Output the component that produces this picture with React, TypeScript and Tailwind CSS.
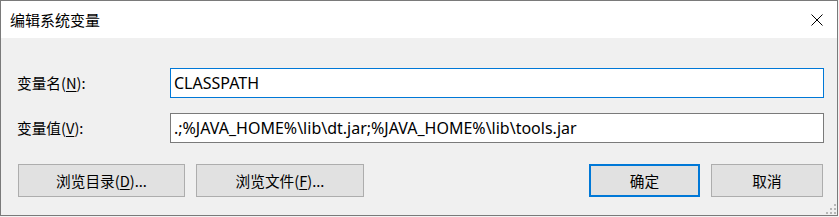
import React from 'react';

const cjk = '"Microsoft YaHei UI", "Noto Sans CJK SC", "Noto Sans", sans-serif';
const latin = '"Segoe UI", "Noto Sans", "Noto Sans CJK SC", sans-serif';

function SizeGrip() {
  const dots = [
    [8, 0],
    [4, 4], [8, 4],
    [0, 8], [4, 8], [8, 8],
  ];
  return (
    <svg width="11" height="11" viewBox="0 0 11 11" className="absolute right-[1px] bottom-[1px]">
      {dots.map(([x, y], i) => (
        <rect key={i} x={x + 1} y={y + 1} width="2" height="2" fill="#b7b7b7" />
      ))}
    </svg>
  );
}

function Field({ label, hotkey, value, focused }: { label: string; hotkey: string; value: string; focused?: boolean }) {
  return (
    <div className="flex items-center">
      <label className="w-[153px] text-[14.67px] text-black leading-none" style={{ fontFamily: cjk }}>
        {label}(<span className="underline underline-offset-2">{hotkey}</span>):
      </label>
      <div
        className={`w-[654px] h-[30px] bg-white border flex items-center pl-[3px] ${
          focused ? 'border-[#0078d7]' : 'border-[#7a7a7a]'
        }`}
      >
        <span className="text-[16px] text-black whitespace-nowrap leading-none" style={{ fontFamily: latin }}>
          {value}
        </span>
      </div>
    </div>
  );
}

function Button({ children, primary, className }: { children: React.ReactNode; primary?: boolean; className: string }) {
  return (
    <button
      className={`h-[33px] bg-[#e1e1e1] flex items-center justify-center text-[14.67px] text-black ${
        primary ? 'border-2 border-[#0078d7]' : 'border border-[#adadad]'
      } ${className}`}
      style={{ fontFamily: cjk }}
    >
      {children}
    </button>
  );
}

export default function App() {
  return (
    <div className="w-[839px] h-[217px] bg-[#f3f3f3]">
      <div className="w-[838px] h-[216px] border border-[#7a7a7a] flex flex-col">
        {/* Title bar */}
        <div className="h-[37px] bg-white flex items-center justify-between pl-[9px] pr-[14px]">
          <span className="text-[15px] text-black leading-none" style={{ fontFamily: cjk }}>
            编辑系统变量
          </span>
          <svg width="12" height="12" viewBox="0 0 12 12">
            <path d="M0.5 0.5 L11.5 11.5 M11.5 0.5 L0.5 11.5" stroke="#000" strokeWidth="1" />
          </svg>
        </div>

        {/* Body */}
        <div className="flex-1 bg-[#f0f0f0] relative pl-[16px] pt-[30px]">
          <div className="flex flex-col gap-[15px]">
            <Field label="变量名" hotkey="N" value="CLASSPATH" focused />
            <Field label="变量值" hotkey="V" value=".;%JAVA_HOME%\lib\dt.jar;%JAVA_HOME%\lib\tools.jar" />
          </div>

          <div className="flex items-center mt-[21px] pl-[1px]">
            <Button className="w-[167px]">
              浏览目录(<span className="underline underline-offset-2">D</span>)...
            </Button>
            <Button className="w-[168px] ml-[11px]">
              浏览文件(<span className="underline underline-offset-2">F</span>)...
            </Button>
            <Button primary className="w-[111px] ml-[225px]">
              确定
            </Button>
            <Button className="w-[112px] ml-[11px]">取消</Button>
          </div>

          <SizeGrip />
        </div>
      </div>
    </div>
  );
}
